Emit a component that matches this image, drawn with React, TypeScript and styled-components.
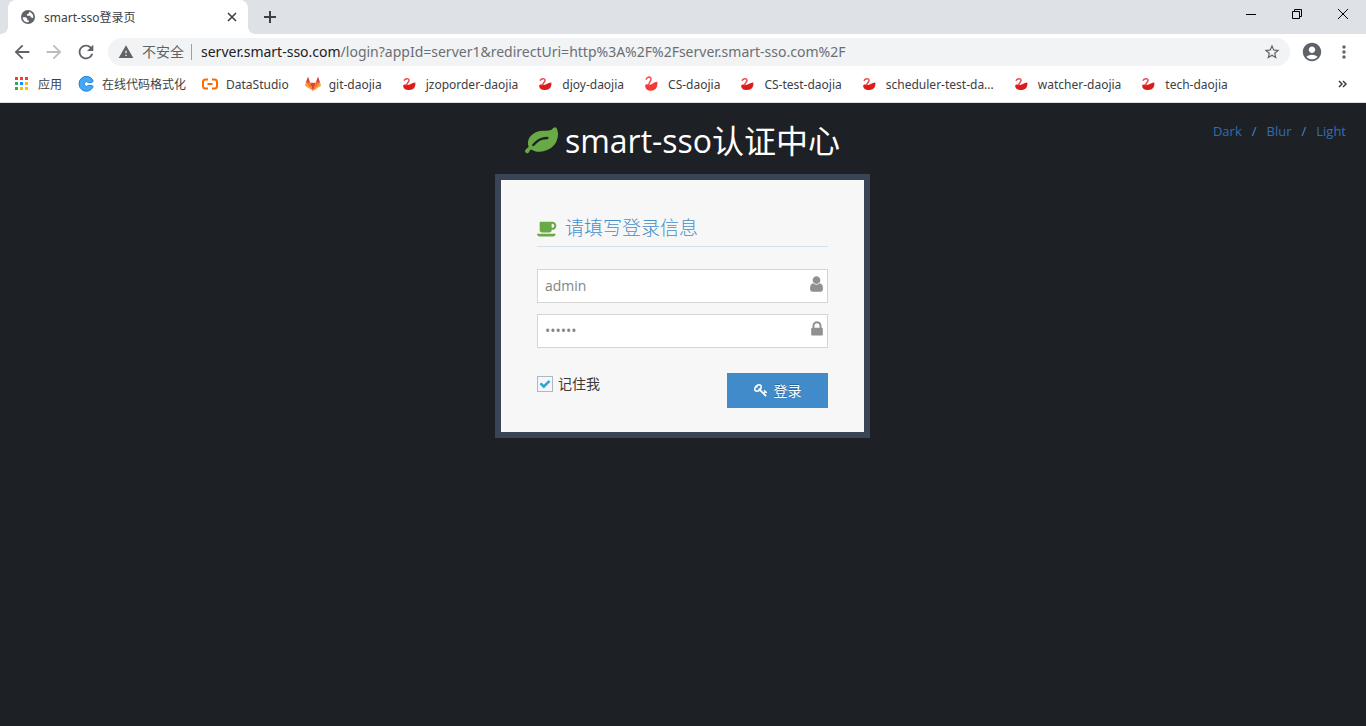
import React from 'react';
import styled, { createGlobalStyle } from 'styled-components';
import {
  MdArrowBack,
  MdArrowForward,
  MdRefresh,
  MdWarning,
  MdStarBorder,
  MdAccountCircle,
  MdMoreVert,
} from 'react-icons/md';

const GlobalStyle = createGlobalStyle`
  *, *::before, *::after { box-sizing: border-box; }
  html, body, #root { height: 100%; }
  body {
    margin: 0;
    background: #1d2024;
    font-family: 'Open Sans', 'Noto Sans CJK SC', sans-serif;
    font-size: 14px;
  }
  button, input { font: inherit; }
  svg { flex: none; }
`;

const Window = styled.div`
  display: flex;
  flex-direction: column;
  min-height: 100%;
`;

/* ---------- browser frame ---------- */

const Frame = styled.div`
  font-family: 'Noto Sans', 'Noto Sans CJK SC', sans-serif;
`;

const TabStrip = styled.header`
  display: flex;
  height: 34px;
  padding-left: 8px;
  background: #dee1e6;
`;

const Tab = styled.div`
  position: relative;
  display: flex;
  align-items: center;
  width: 240px;
  padding: 0 8px 0 12px;
  border-radius: 8px 8px 0 0;
  background: #fff;
  color: #3c4043;
  font-size: 12px;

  &::before,
  &::after {
    content: '';
    position: absolute;
    bottom: 0;
    width: 8px;
    height: 8px;
  }
  &::before {
    left: -8px;
    background: radial-gradient(circle at 0 0, #dee1e6 8px, #fff 8px);
  }
  &::after {
    right: -8px;
    background: radial-gradient(circle at 100% 0, #dee1e6 8px, #fff 8px);
  }
`;

const TabTitle = styled.span`
  flex: 1;
  margin-left: 8px;
`;

const IconButton = styled.button<{ $size?: number; $color?: string }>`
  display: flex;
  align-items: center;
  justify-content: center;
  flex: none;
  width: ${(p) => p.$size ?? 32}px;
  height: ${(p) => p.$size ?? 32}px;
  padding: 0;
  border: 0;
  background: none;
  color: ${(p) => p.$color ?? '#5f6368'};
`;

const NewTab = styled(IconButton)`
  margin: 1px 0 0 6px;
`;

const WindowControls = styled.div`
  display: flex;
  margin-left: auto;
`;

const WindowButton = styled.button`
  display: flex;
  align-items: center;
  justify-content: center;
  width: 46px;
  height: 28px;
  padding: 0;
  border: 0;
  background: none;
  color: #000;
`;

const Toolbar = styled.div`
  display: flex;
  align-items: center;
  height: 36px;
  padding: 0 6px;
  background: #fff;
`;

const AddressBar = styled.div`
  display: flex;
  align-items: center;
  flex: 1;
  height: 28px;
  margin: 0 6px;
  padding: 0 10px;
  border-radius: 14px;
  background: #f1f3f4;
  color: #5f6368;
`;

const Insecure = styled.span`
  margin-left: 8px;
  padding-right: 7px;
  border-right: 1px solid #9aa0a6;
  line-height: 16px;
`;

const Url = styled.span`
  flex: 1;
  margin-left: 9px;
  padding-bottom: 2px;
  overflow: hidden;
  color: #6b6f74;
  white-space: nowrap;
`;

const Host = styled.span`
  color: #202124;
`;

const Bookmarks = styled.nav`
  display: flex;
  align-items: center;
  gap: 16px;
  height: 33px;
  padding: 0 18px 4px 14px;
  border-bottom: 1px solid #dadce0;
  background: #fff;
`;

const Bookmark = styled.a`
  display: flex;
  align-items: center;
  gap: 8px;
  color: #3c4043;
  font-size: 12px;
  white-space: nowrap;
  text-decoration: none;

  &:nth-child(n + 5) {
    margin-left: 4px;
  }
`;

const More = styled.button`
  display: flex;
  margin-left: auto;
  padding: 0;
  border: 0;
  background: none;
  color: #3c4043;
`;

/* ---------- login page ---------- */

const Page = styled.main`
  position: relative;
  display: flex;
  flex: 1;
  flex-direction: column;
  align-items: center;
  padding: 16px 21px 16px 20px;
  background: #1d2024;
`;

const Themes = styled.nav`
  position: absolute;
  top: 18px;
  right: 20px;
  display: flex;
  gap: 10px;
  color: #428bca;
  font-size: 13px;
  line-height: 20px;
`;

const ThemeLink = styled.a`
  color: #2f6eb5;
  text-decoration: none;
`;

const Title = styled.h1`
  display: flex;
  align-items: center;
  gap: 7px;
  margin: 0 0 11px;
  color: #fff;
  font-size: 32px;
  font-weight: 400;
  line-height: 44px;
`;

const Box = styled.form`
  width: 100%;
  max-width: 375px;
  padding: 32px 36px 24px;
  border: 6px solid #394557;
  background: #f7f7f7;
`;

const Heading = styled.h2`
  display: flex;
  align-items: center;
  gap: 8px;
  margin: 0 0 22px;
  padding-bottom: 2px;
  border-bottom: 1px solid #d0e1ef;
  color: #478fca;
  font-size: 19px;
  font-weight: 300;
  line-height: 32px;
`;

const Field = styled.label`
  position: relative;
  display: block;
  margin-bottom: 11px;
`;

const FieldIcon = styled.span`
  position: absolute;
  top: 6px;
  right: 5px;
  display: flex;
  color: #909090;
`;

const TextInput = styled.input`
  display: block;
  width: 100%;
  height: 34px;
  padding: 0 24px 2px 7px;
  border: 1px solid #d5d5d5;
  border-radius: 0;
  outline: 0;
  background: #fff;
  color: #858585;
  font-size: 14px;
`;

const Actions = styled.div`
  display: flex;
  align-items: flex-start;
  justify-content: space-between;
  padding-top: 14px;
`;

const Remember = styled.label`
  position: relative;
  display: flex;
  align-items: center;
  gap: 5px;
  color: #393939;
  line-height: 22px;
`;

const Tick = styled.input`
  width: 16px;
  height: 16px;
  margin: 0;
  appearance: none;
  border: 1px solid #adb8c0;
  background: #f3f6fa;

  & + svg {
    position: absolute;
    left: 2px;
    visibility: hidden;
    color: #32a3ce;
    pointer-events: none;
  }
  &:checked + svg {
    visibility: visible;
  }
`;

const Submit = styled.button`
  display: flex;
  align-items: center;
  justify-content: center;
  gap: 6px;
  width: 101px;
  height: 35px;
  padding: 0 0 2px;
  border: 0;
  background: #428bca;
  color: #fff;
  text-shadow: 0 -1px 0 rgba(0, 0, 0, 0.25);
`;

/* ---------- drawings ---------- */

type GlyphProps = { d: string; size: number; width?: number; color?: string };

const Glyph = ({ d, size, width = 1792, color = 'currentColor' }: GlyphProps) => (
  <svg width={Math.round((size * width) / 1792)} height={size} viewBox={`0 0 ${width} 1792`} fill={color} aria-hidden="true">
    <path d={d} />
  </svg>
);

const LEAF =
  'M1280 704q0-26-19-45t-45-19q-172 0-318 49.5t-259.5 134-235.5 219.5q-19 21-19 45 0 26 19 45t45 19q24 0 45-19 27-24 74-71t67-66q137-124 268.5-176t313.5-52q26 0 45-19t19-45zm512-198q0 95-20 193-46 224-184.5 383t-357.5 268q-214 108-438 108-148 0-286-47-15-5-88-42t-96-37q-16 0-39.5 32t-45 70-52.5 70-60 32q-43 0-63.5-17.5t-45.5-59.5q-2-4-6-11t-5.5-10-3-9.5-1.5-13.5q0-35 31-73.5t68-65.5 68-56 31-48q0-4-14-38t-16-44q-9-51-9-104 0-115 43.5-220t119-184.5 170.5-139 204-95.5q55-18 145-25.5t179.5-9 178.5-6 163.5-24 113.5-56.5l29.5-29.5 29.5-28 27-20 36.5-16 43.5-4.5q39 0 70.5 46t47.5 112 24 124 8 96z';
const CUP =
  'M1664 640q0-80-56-136t-136-56h-64v384h64q80 0 136-56t56-136zm-1664 768h1792q0 106-75 181t-181 75h-1280q-106 0-181-75t-75-181zm1856-768q0 159-112.5 271.5t-271.5 112.5h-64v32q0 92-66 158t-158 66h-704q-92 0-158-66t-66-158v-736q0-26 19-45t45-19h1152q159 0 271.5 112.5t112.5 271.5z';
const USER =
  'M1280 1399q0 109-62.5 187t-150.5 78h-854q-88 0-150.5-78t-62.5-187q0-85 8.5-160.5t31.5-152 58.5-131 94-89 134.5-34.5q131 128 313 128t313-128q76 0 134.5 34.5t94 89 58.5 131 31.5 152 8.5 160.5zm-256-887q0 159-112.5 271.5t-271.5 112.5-271.5-112.5-112.5-271.5 112.5-271.5 271.5-112.5 271.5 112.5 112.5 271.5z';
const LOCK =
  'M320 768h512v-192q0-106-75-181t-181-75-181 75-75 181v192zm832 96v576q0 40-28 68t-68 28h-960q-40 0-68-28t-28-68v-576q0-40 28-68t68-28h32v-192q0-184 132-316t316-132 316 132 132 316v192h32q40 0 68 28t28 68z';
const KEY =
  'M832 512q0-80-56-136t-136-56-136 56-56 136q0 42 19 83-41-19-83-19-80 0-136 56t-56 136 56 136 136 56 136-56 56-136q0-42-19-83 41 19 83 19 80 0 136-56t56-136zm851 704q0 17-49 66t-66 49q-9 0-28.5-16t-36.5-33-38.5-40-24.5-26l-96 96 220 220q28 28 28 68 0 42-39 81t-81 39q-40 0-68-28l-671-671q-176 131-365 131-163 0-265.5-102.5t-102.5-265.5q0-160 95-313t248-248 313-95q163 0 265.5 102.5t102.5 265.5q0 189-131 365l355 355 96-96q-3-3-26-24.5t-40-38.5-33-36.5-16-28.5q0-17 49-66t66-49q13 0 23 10 6 6 46 44.5t82 79.5 86.5 86 73 78 28.5 41z';
const CHECK =
  'M1671 566q0 40-28 68l-724 724-136 136q-28 28-68 28t-68-28l-136-136-362-362q-28-28-28-68t28-68l136-136q28-28 68-28t68 28l294 295 656-657q28-28 68-28t68 28l136 136q28 28 28 68z';

const Globe = () => (
  <svg width="16" height="16" viewBox="0 0 16 16" aria-hidden="true">
    <circle cx="8" cy="8" r="7" fill="#5f6368" />
    <path
      d="M2.6 8.2h3.2l1.5 1.5v1.6h1.4v1.9c-3 .5-6-1.7-6.1-5zM9.3 2.8 8.8 4.5 7 5.2v1.5h3.6v1.9h1.5l1 1c.7-2.6-.6-5.7-3.8-6.8z"
      fill="#fff"
    />
  </svg>
);

const AppsIcon = () => {
  const colors = ['#ea4335', '#ea4335', '#ea4335', '#34a853', '#1a8cff', '#fbbc04', '#34a853', '#fbbc04', '#fbbc04'];
  return (
    <svg width="16" height="16" viewBox="0 0 16 16" aria-hidden="true">
      {colors.map((c, i) => (
        <rect key={i} x={1 + (i % 3) * 5} y={1 + Math.floor(i / 3) * 5} width="3" height="3" fill={c} />
      ))}
    </svg>
  );
};

const FormatterIcon = () => (
  <svg width="16" height="16" viewBox="0 0 16 16" aria-hidden="true">
    <path
      d="M15.2 10.8A7.4 7.4 0 1 1 15.2 4.8Q14.6 6.6 13 6.6H10.3A2.3 2.3 0 1 0 10.3 9.4H13Q14.6 9.4 15.2 10.8z"
      fill="#42a9fb"
      stroke="#1c7fd6"
      strokeWidth="1"
      strokeLinejoin="round"
    />
  </svg>
);

const StudioIcon = () => (
  <svg width="16" height="16" viewBox="0 0 16 16" fill="none" stroke="#ff6a00" strokeWidth="2" aria-hidden="true">
    <path d="M6 3.5H3.5Q1 3.5 1 6v4q0 2.5 2.5 2.5H6M10 3.5h2.5Q15 3.5 15 6v4q0 2.5-2.5 2.5H10M5.5 8h5" />
  </svg>
);

const GitIcon = () => (
  <svg width="16" height="16" viewBox="0 0 16 16" aria-hidden="true">
    <path d="M8 15 5 6.8h6z" fill="#e24329" />
    <path d="M8 15 5 6.8H.8zM8 15l3-8.2h4.2z" fill="#fc6d26" />
    <path d="M.8 6.800 0 9.300q0 .5.4.8L8 15zM15.200 6.800l.8 2.500q0 .5-.4.8L8 15z" fill="#fca326" />
    <path d="M.8 6.800 2.700 1.200q.3-.4.6 0L5.200 6.800zM15.200 6.800 13.300 1.200q-.3-.4-.6 0L10.800 6.800z" fill="#e24329" />
  </svg>
);

const SwanIcon = ({ tall }: { tall?: boolean }) => (
  <svg width="16" height="16" viewBox="0 0 16 16" aria-hidden="true">
    <g transform={tall ? 'translate(0 -2) scale(1 1.2)' : undefined} fill={tall ? '#f23a3a' : '#dc1c1c'}>
      <path d="M1.200 9.400C1.800 8.200 3.500 8.300 5 8.800 8 9.600 9 6.800 13.300 6.500 14 11 11.500 14 7.200 14 3.500 14 1 12.500 1.200 9.400z" />
      <path
        d="M2 4.800C2.800 2.200 7 1.800 7 4.400 7 6.400 4.500 6.800 4.600 9.500"
        fill="none"
        stroke={tall ? '#f45050' : '#e84a4a'}
        strokeWidth="1.5"
      />
    </g>
  </svg>
);

const bookmarks: { label: string; icon: React.ReactNode }[] = [
  { label: '应用', icon: <AppsIcon /> },
  { label: '在线代码格式化', icon: <FormatterIcon /> },
  { label: 'DataStudio', icon: <StudioIcon /> },
  { label: 'git-daojia', icon: <GitIcon /> },
  { label: 'jzoporder-daojia', icon: <SwanIcon /> },
  { label: 'djoy-daojia', icon: <SwanIcon /> },
  { label: 'CS-daojia', icon: <SwanIcon tall /> },
  { label: 'CS-test-daojia', icon: <SwanIcon /> },
  { label: 'scheduler-test-da...', icon: <SwanIcon /> },
  { label: 'watcher-daojia', icon: <SwanIcon /> },
  { label: 'tech-daojia', icon: <SwanIcon /> },
];

export default function App() {
  return (
    <Window>
      <GlobalStyle />
      <Frame>
        <TabStrip>
          <Tab>
            <Globe />
            <TabTitle>smart-sso登录页</TabTitle>
            <IconButton $size={16} $color="#3c4043" aria-label="关闭标签页">
              <svg width="10" height="10" viewBox="0 0 10 10" stroke="currentColor" strokeWidth="1.6">
                <path d="M1 1l8 8M9 1L1 9" />
              </svg>
            </IconButton>
          </Tab>
          <NewTab $color="#3c4043" aria-label="新标签页">
            <svg width="12" height="12" viewBox="0 0 12 12" stroke="currentColor" strokeWidth="2">
              <path d="M6 0v12M0 6h12" />
            </svg>
          </NewTab>
          <WindowControls>
            <WindowButton aria-label="最小化">
              <svg width="10" height="10" viewBox="0 0 10 10" stroke="currentColor">
                <path d="M0 5.5h10" />
              </svg>
            </WindowButton>
            <WindowButton aria-label="还原">
              <svg width="10" height="10" viewBox="0 0 10 10" fill="none" stroke="currentColor">
                <path d="M.5 2.5h7v7h-7zM2.5 2.5v-2h7v7h-2" />
              </svg>
            </WindowButton>
            <WindowButton aria-label="关闭">
              <svg width="10" height="10" viewBox="0 0 10 10" stroke="currentColor">
                <path d="M0 0l10 10M10 0L0 10" />
              </svg>
            </WindowButton>
          </WindowControls>
        </TabStrip>

        <Toolbar>
          <IconButton aria-label="后退">
            <MdArrowBack size={22} />
          </IconButton>
          <IconButton $color="#babcbe" aria-label="前进">
            <MdArrowForward size={22} />
          </IconButton>
          <IconButton aria-label="刷新">
            <MdRefresh size={22} />
          </IconButton>
          <AddressBar>
            <MdWarning size={16} />
            <Insecure>不安全</Insecure>
            <Url>
              <Host>server.smart-sso.com</Host>
              /login?appId=server1&amp;redirectUri=http%3A%2F%2Fserver.smart-sso.com%2F
            </Url>
            <IconButton $size={16} aria-label="收藏">
              <MdStarBorder size={18} />
            </IconButton>
          </AddressBar>
          <IconButton aria-label="用户">
            <MdAccountCircle size={22} />
          </IconButton>
          <IconButton aria-label="菜单">
            <MdMoreVert size={20} />
          </IconButton>
        </Toolbar>

        <Bookmarks>
          {bookmarks.map((b) => (
            <Bookmark key={b.label} href="#">
              {b.icon}
              {b.label}
            </Bookmark>
          ))}
          <More aria-label="更多书签">
            <svg width="10" height="8" viewBox="0 0 10 8" fill="none" stroke="currentColor" strokeWidth="1.5">
              <path d="M1 1l3 3-3 3M5 1l3 3-3 3" />
            </svg>
          </More>
        </Bookmarks>
      </Frame>

      <Page>
        <Themes>
          <ThemeLink href="#dark">Dark</ThemeLink>
          <span>/</span>
          <ThemeLink href="#blur">Blur</ThemeLink>
          <span>/</span>
          <ThemeLink href="#light">Light</ThemeLink>
        </Themes>
        <Title>
          <Glyph d={LEAF} size={33} color="#69aa46" />
          <span>smart-sso认证中心</span>
        </Title>
        <Box onSubmit={(e) => e.preventDefault()}>
          <Heading>
            <Glyph d={CUP} size={19} width={1920} color="#69aa46" />
            请填写登录信息
          </Heading>
          <Field>
            <TextInput type="text" aria-label="用户名" defaultValue="admin" />
            <FieldIcon>
              <Glyph d={USER} size={18} width={1280} />
            </FieldIcon>
          </Field>
          <Field>
            <TextInput type="password" aria-label="密码" defaultValue="123456" />
            <FieldIcon>
              <Glyph d={LOCK} size={18} width={1152} />
            </FieldIcon>
          </Field>
          <Actions>
            <Remember>
              <Tick type="checkbox" defaultChecked />
              <Glyph d={CHECK} size={12} />
              记住我
            </Remember>
            <Submit type="submit">
              <Glyph d={KEY} size={14} />
              登录
            </Submit>
          </Actions>
        </Box>
      </Page>
    </Window>
  );
}
